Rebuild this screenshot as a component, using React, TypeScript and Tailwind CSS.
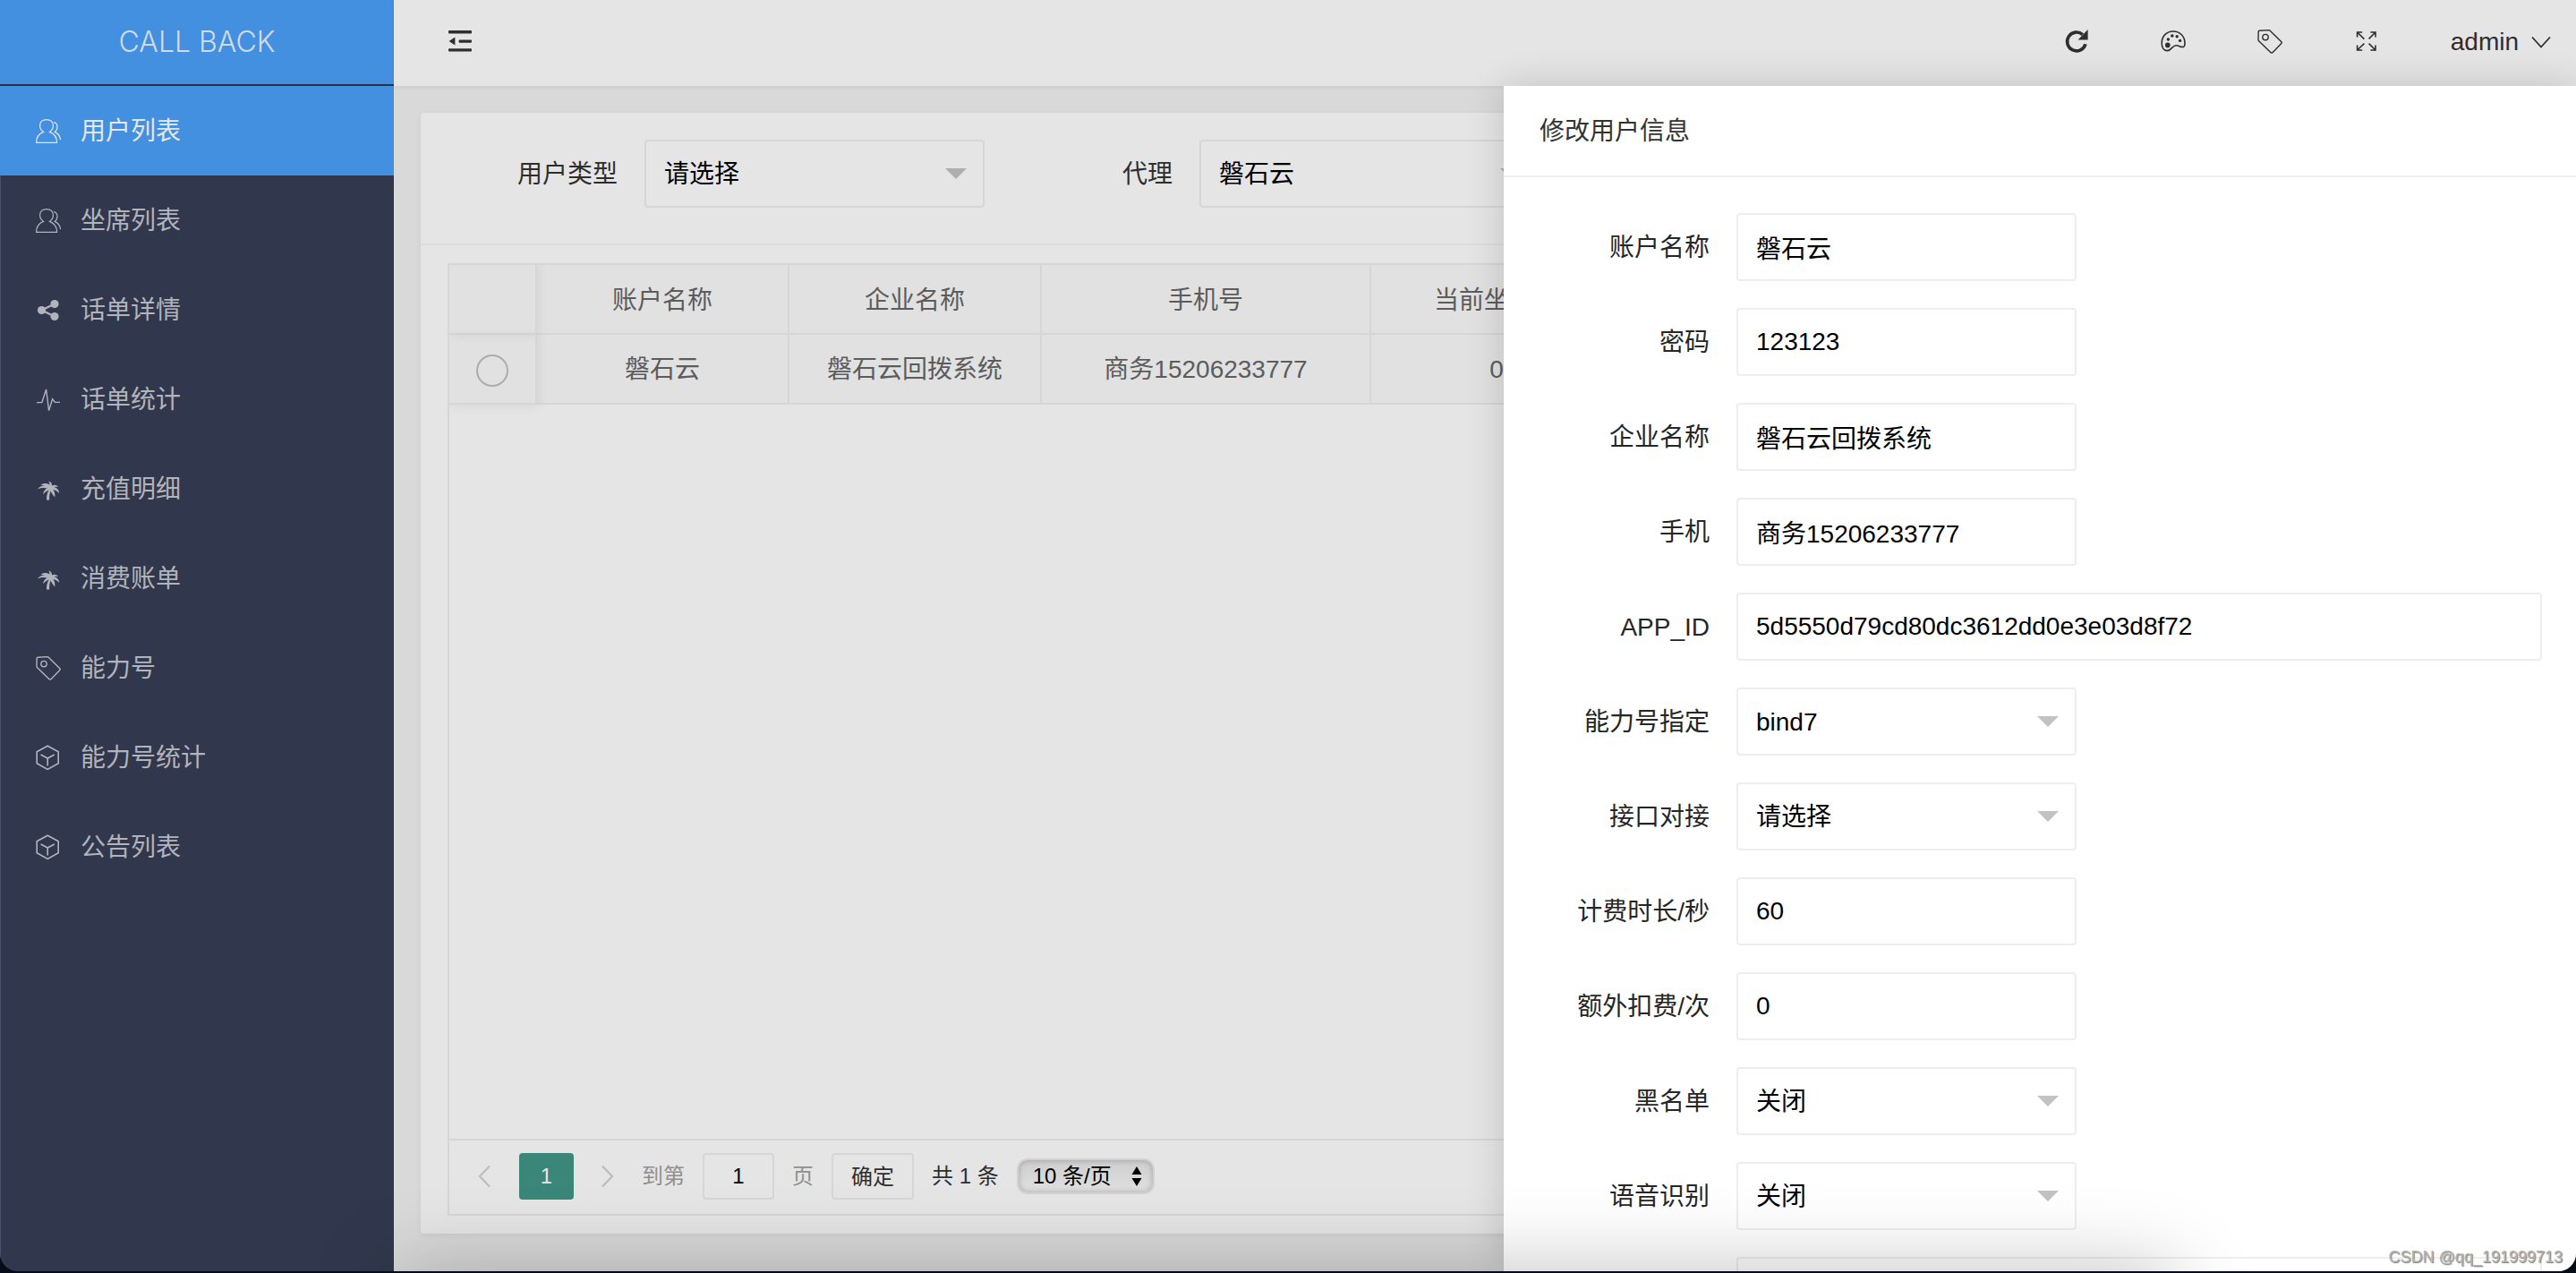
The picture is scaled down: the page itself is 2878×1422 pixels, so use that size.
import { useState } from "react";
import type { ReactNode } from "react";

const ICONS: Record<string, ReactNode> = {
  user: (
    <g fill="none" stroke="currentColor" strokeWidth="1.2">
      <path d="M8.6 15.4C6 13.6 4.6 11.2 4.6 8.2 4.6 4 7.8 1.6 12 1.6s7.4 2.4 7.4 6.6c0 3-1.4 5.4-4 7.2 5.200 2 8.200 5.800 8.200 12H.6c0-6.200 2.800-10 8-12z" />
      <path d="M20.200 4.400c2.300.8 3.800 2.600 3.800 5.400 0 2.400-.8 4.200-2.800 5.600 3.600 1.800 6 4.600 6.400 8.800" />
    </g>
  ),
  share: (
    <g fill="currentColor">
      <path d="M6.500 14.500L21 7.500M6.500 14.500L21 21.500" stroke="currentColor" strokeWidth="2.200" />
      <circle cx="6.500" cy="14.500" r="4.600" />
      <circle cx="21" cy="7.500" r="4.600" />
      <circle cx="21" cy="21.500" r="4.600" />
    </g>
  ),
  pulse: (
    <path
      d="M1 17.600h5.800L11.600 3l3 23.600 4-12.800 2.800 3.600H27"
      fill="none"
      stroke="currentColor"
      strokeWidth="1.400"
    />
  ),
  palm: (
    <path
      d="M15.400 9.600c-3-2.200-7.400-2-9.800.4 2-.2 3.200 0 4.400.4C6.600 10.400 3.600 11.600 2 14.400c4-1.800 7.600-1.800 10.400-1-2.400 1.400-4 3.600-4.200 6.800 2.200-2.600 4.200-4.200 6.400-4.800-2 3.400-2.800 7.200-2.600 11h3.200c-.2-4 .2-7 1.400-9.800 1.200 2.800 2.800 4.800 4.600 7 .6-3.400-.2-6.400-1.800-8.600 2.400.4 4.600 1.800 6.800 4-.2-3.800-2.600-6.200-5.600-6.800 1.600-.6 2.800-.6 4.400-.2-1.600-2.400-4.600-2.800-7-1.400.4-2.200-1-4.400-3.600-5.200.8 1.600 1.200 2.800 1 4.200z"
      fill="currentColor"
    />
  ),
  tag: (
    <g fill="none" stroke="currentColor" strokeWidth="1.400" strokeLinejoin="round">
      <path d="M2.200 2.200l10.600-.6c.6 0 1 .2 1.400.6l12.400 12.200c.8.8.8 1.600 0 2.400L17.200 26.600c-.8.8-1.600.8-2.400 0L1.400 13.400c-.4-.4-.4-.8-.4-1.400l.2-8.800c0-.6.4-1 1-1z" />
      <circle cx="9" cy="9.600" r="3.200" />
    </g>
  ),
  cube: (
    <g fill="none" stroke="currentColor" strokeWidth="1.600">
      <path d="M13.200 1.200L25.200 7.800v13L13.200 27.400 1.200 20.800v-13z" />
      <path d="M5.600 11l7.600 4 7.600-4M13.200 15v8.400" />
    </g>
  ),
  refresh: (
    <g>
      <path d="M24 17.200A10.400 10.400 0 1 1 20.800 6.600" fill="none" stroke="currentColor" strokeWidth="3.600" />
      <path d="M26.600 1v11.400H15.600z" fill="currentColor" />
    </g>
  ),
  palette: (
    <g fill="currentColor">
      <path
        d="M14 3C6.600 3 1.200 8.400 1.200 16c0 5 2.400 8.600 6.200 8.600 2.600 0 4-1.800 5.600-3.600 1.600-1.800 3.600-2.800 6-2 2.400.7 4 2 6.400 1.400C26.600 20 27 18 27 16 27 8.600 21.400 3 14 3z"
        fill="none"
        stroke="currentColor"
        strokeWidth="1.600"
      />
      <circle cx="7.800" cy="18.400" r="2.800" />
      <circle cx="8.400" cy="12" r="1.700" />
      <circle cx="12.800" cy="8" r="1.800" />
      <circle cx="18.200" cy="8.800" r="1.700" />
      <circle cx="21.600" cy="13.400" r="1.700" />
    </g>
  ),
  expand: (
    <path
      d="M3.600 9.600V4h5.600M3.600 4l7.800 7.600M18.400 4H24v5.600M24 4l-7.400 7.400M3.600 18.400V24h5.600M3.600 24l7.800-7.400M18.400 24H24v-5.600M24 24l-7.400-7.400"
      fill="none"
      stroke="currentColor"
      strokeWidth="1.600"
    />
  ),
  fold: (
    <g fill="currentColor">
      <rect x="1" y="2" width="26" height="3.400" rx="1" />
      <rect x="12.600" y="12.400" width="14.400" height="3.400" rx="1" />
      <rect x="1" y="22.200" width="26" height="3.400" rx="1" />
      <path d="M1.600 14L8.400 9.600v8.800z" />
    </g>
  ),
};

function Icon({ name }: { name: string }) {
  return (
    <svg viewBox="0 0 28 28" className="h-7 w-7 shrink-0" aria-hidden="true">
      {ICONS[name]}
    </svg>
  );
}

const MENU = [
  { label: "用户列表", icon: "user" },
  { label: "坐席列表", icon: "user" },
  { label: "话单详情", icon: "share" },
  { label: "话单统计", icon: "pulse" },
  { label: "充值明细", icon: "palm" },
  { label: "消费账单", icon: "palm" },
  { label: "能力号", icon: "tag" },
  { label: "能力号统计", icon: "cube" },
  { label: "公告列表", icon: "cube" },
];

const TOOLS = [
  { label: "刷新", icon: "refresh" },
  { label: "主题", icon: "palette" },
  { label: "便签", icon: "tag" },
  { label: "全屏", icon: "expand" },
];

const FIELDS = [
  { id: "account", label: "账户名称", value: "磐石云", type: "text" },
  { id: "password", label: "密码", value: "123123", type: "text" },
  { id: "company", label: "企业名称", value: "磐石云回拨系统", type: "text" },
  { id: "phone", label: "手机", value: "商务15206233777", type: "text" },
  { id: "appid", label: "APP_ID", value: "5d5550d79cd80dc3612dd0e3e03d8f72", type: "wide" },
  { id: "bind", label: "能力号指定", value: "bind7", type: "select" },
  { id: "api", label: "接口对接", value: "请选择", type: "select" },
  { id: "duration", label: "计费时长/秒", value: "60", type: "text" },
  { id: "extra", label: "额外扣费/次", value: "0", type: "text" },
  { id: "blacklist", label: "黑名单", value: "关闭", type: "select" },
  { id: "asr", label: "语音识别", value: "关闭", type: "select" },
];

const COLUMNS = ["账户名称", "企业名称", "手机号", "当前坐席数"];
const ROW = ["磐石云", "磐石云回拨系统", "商务15206233777", "0"];

function SelectBox({ id, value, dim }: { id: string; value: string; dim?: boolean }) {
  return (
    <div className="relative w-[380px] shrink-0">
      <select
        id={id}
        defaultValue={value}
        className={`h-[76px] w-full appearance-none rounded border-2 bg-transparent pt-0.5 pr-14 pl-5 text-black ${
          dim ? "border-[#d6d6d6]" : "border-[#eeeeee]"
        }`}
      >
        <option>{value}</option>
      </select>
      <svg
        viewBox="0 0 24 12"
        className={`pointer-events-none absolute top-8 right-5 h-3 w-6 ${dim ? "text-[#aeaeae]" : "text-[#c2c2c2]"}`}
        aria-hidden="true"
      >
        <path d="M0 0h24L12 12z" fill="currentColor" />
      </svg>
    </div>
  );
}

function Sidebar() {
  const [active, setActive] = useState(0);

  return (
    <aside className="flex w-[440px] shrink-0 flex-col bg-[#31384d] shadow-[inset_1px_0_0_#48506a]">
      <div className="flex h-24 shrink-0 items-center justify-center border-b-2 border-[#293246] bg-[#438fe0] font-[Inter,'Liberation_Sans',sans-serif] text-[32px] font-light text-[#cfdbe9]">
        CALL BACK
      </div>
      <nav>
        {MENU.map((m, i) => (
          <a
            key={m.label}
            href="#"
            onClick={() => setActive(i)}
            className={`flex h-[100px] items-center gap-[22px] pl-10 ${
              i === active ? "bg-[#438fe0] text-[#e6e6e6]" : "text-[#b1b4bb]"
            }`}
          >
            <Icon name={m.icon} />
            <span className="pt-0.5">{m.label}</span>
          </a>
        ))}
      </nav>
    </aside>
  );
}

function Header() {
  return (
    <header className="flex h-24 shrink-0 items-center justify-between bg-[#e5e5e5] text-[#2e2e2e] shadow-[0_2px_4px_rgba(0,0,0,0.06)]">
      <button aria-label="收起菜单" className="ml-15 pb-1">
        <Icon name="fold" />
      </button>
      <div className="flex h-full items-center">
        {TOOLS.map((t) => (
          <button key={t.icon} aria-label={t.label} className="flex w-[108px] justify-center pb-1">
            <Icon name={t.icon} />
          </button>
        ))}
        <button className="flex items-center gap-3.5 pr-7 pb-0.5 pl-10">
          admin
          <svg viewBox="0 0 22 14" className="h-3.5 w-[22px]" aria-hidden="true">
            <path d="M1 1.500l10 11 10-11" fill="none" stroke="currentColor" strokeWidth="1.800" />
          </svg>
        </button>
      </div>
    </header>
  );
}

function Pager() {
  return (
    <div className="flex h-[84px] shrink-0 items-center border-t-2 border-[#d6d6d6] pb-0.5 text-2xl text-[#8f8f8f]">
      <button aria-label="上一页" className="flex w-[78px] justify-center">
        <svg viewBox="0 0 14 26" className="h-[26px] w-3.5" aria-hidden="true">
          <path d="M13 1.500L2 13l11 11.500" fill="none" stroke="#bcbcbc" strokeWidth="2.200" />
        </svg>
      </button>
      <button className="h-[52px] w-[61px] rounded bg-[#3a8779] text-[#e6e6e6]">1</button>
      <button aria-label="下一页" className="flex w-[76px] justify-center">
        <svg viewBox="0 0 14 26" className="h-[26px] w-3.5" aria-hidden="true">
          <path d="M1 1.500L12 13 1 24.500" fill="none" stroke="#bcbcbc" strokeWidth="2.200" />
        </svg>
      </button>
      <div className="flex items-center gap-5">
        <label htmlFor="page">到第</label>
        <input
          id="page"
          defaultValue="1"
          className="h-[52px] w-20 rounded border-2 border-[#d6d6d6] text-center text-black"
        />
        <span>页</span>
        <button className="h-[52px] w-[92px] rounded border-2 border-[#d6d6d6] pt-0.5 text-[#2e2e2e]">确定</button>
        <span className="text-[#2e2e2e]">共 1 条</span>
        <div className="relative">
          <select
            aria-label="每页条数"
            className="h-10 w-[154px] appearance-none rounded-[12px] border-2 border-[#d2d2d2] bg-linear-to-b from-[#cecece] to-[#e0e0e0] pl-4 text-black shadow-[inset_0_0_6px_rgba(0,0,0,0.25)]"
          >
            <option>10 条/页</option>
          </select>
          <svg
            viewBox="0 0 12 22"
            className="pointer-events-none absolute top-[9px] right-3.5 h-[22px] w-3"
            aria-hidden="true"
          >
            <path d="M6 0l5.500 9H.5zM6 22L.5 13h11z" fill="#000" />
          </svg>
        </div>
      </div>
    </div>
  );
}

function UserTable() {
  return (
    <div className="mx-[30px] my-5 flex min-h-0 flex-1 flex-col border-2 border-[#d6d6d6]">
      <div className="min-h-0 flex-1 overflow-hidden">
        <table className="w-[1312px] table-fixed border-separate border-spacing-0 text-center text-[#5c5c5c]">
          <colgroup>
            <col className="w-[98px]" />
            <col className="w-[282px]" />
            <col className="w-[282px]" />
            <col className="w-[368px]" />
            <col className="w-[282px]" />
          </colgroup>
          <thead>
            <tr className="h-[78px] bg-[#e1e1e1]">
              <td className="relative border-r-2 border-b-2 border-[#d6d6d6] shadow-[2px_0_12px_rgba(0,0,0,0.06)]" />
              {COLUMNS.map((c) => (
                <th key={c} className="border-r-2 border-b-2 border-[#d6d6d6] pt-1 font-normal">
                  {c}
                </th>
              ))}
            </tr>
          </thead>
          <tbody>
            <tr className="h-[78px] bg-[#e1e1e1]">
              <td className="relative border-r-2 border-b-2 border-[#d6d6d6] pt-1 shadow-[2px_2px_12px_rgba(0,0,0,0.06)]">
                <input
                  type="radio"
                  name="row"
                  aria-label="磐石云"
                  className="mx-auto block h-9 w-9 appearance-none rounded-full border-2 border-[#adadad]"
                />
              </td>
              {ROW.map((c) => (
                <td key={c} className="border-r-2 border-b-2 border-[#d6d6d6] pt-0.5">
                  {c}
                </td>
              ))}
            </tr>
          </tbody>
        </table>
      </div>
      <Pager />
    </div>
  );
}

function Drawer() {
  return (
    <section className="absolute top-24 right-0 bottom-0 w-[1198px] overflow-hidden bg-white text-[#262626] shadow-[0_0_40px_rgba(0,0,0,0.16)]">
      <h2 className="flex h-[102px] items-center border-b-2 border-[#f0f0f0] px-10 pt-0.5 text-[#333333]">
        修改用户信息
      </h2>
      <form className="flex flex-col gap-[30px] pt-10 pr-[38px]">
        {FIELDS.map((f) => (
          <div key={f.id} className="flex items-center">
            <label htmlFor={f.id} className="w-[260px] shrink-0 pt-0.5 pr-[30px] text-right">
              {f.label}
            </label>
            {f.type === "select" ? (
              <SelectBox id={f.id} value={f.value} />
            ) : (
              <input
                id={f.id}
                defaultValue={f.value}
                className={`h-[76px] rounded border-2 border-[#eeeeee] pr-3 pl-5 text-black ${
                  f.type === "wide" ? "flex-1" : "w-[380px]"
                }`}
              />
            )}
          </div>
        ))}
        <textarea aria-label="备注" className="ml-[260px] h-[200px] resize-none rounded border-2 border-[#eeeeee] p-5" />
      </form>
    </section>
  );
}

export default function App() {
  return (
    <div className="h-screen bg-[#060c18] pb-0.5 font-['Liberation_Sans','Noto_Sans_CJK_SC',sans-serif] text-[28px] leading-10">
      <div className="relative flex h-full overflow-hidden rounded-b-[20px]">
        <Sidebar />
        <div className="flex min-w-0 flex-1 flex-col bg-[#d9d9d9]">
          <Header />
          <main className="flex min-h-0 flex-1 flex-col px-[30px] pt-[30px] pb-[42px]">
            <div className="flex min-h-0 flex-1 flex-col rounded bg-[#e5e5e5] shadow-[0_2px_6px_rgba(0,0,0,0.06)]">
              <div className="flex items-center gap-5 overflow-hidden border-b-2 border-[#dddddd] px-[30px] pt-[30px] pb-10 text-[#2e2e2e]">
                <div className="flex items-center">
                  <label htmlFor="kind" className="w-[220px] pt-0.5 pr-[30px] text-right">
                    用户类型
                  </label>
                  <SelectBox id="kind" value="请选择" dim />
                </div>
                <div className="flex items-center">
                  <label htmlFor="agent" className="w-[220px] pt-0.5 pr-[30px] text-right">
                    代理
                  </label>
                  <SelectBox id="agent" value="磐石云" dim />
                </div>
              </div>
              <UserTable />
            </div>
          </main>
        </div>
        <Drawer />
        {/* soft shade rising from the bottom edge */}
        <div className="pointer-events-none absolute top-full right-[450px] left-[440px] h-20 shadow-[0_0_90px_rgba(0,0,0,0.26)]" />
      </div>
      <div className="pointer-events-none absolute right-[15px] bottom-1.5 text-[18px] leading-6 text-[#b4b4b4] [text-shadow:1px_1px_1px_#777]">
        CSDN @qq_191999713
      </div>
    </div>
  );
}
